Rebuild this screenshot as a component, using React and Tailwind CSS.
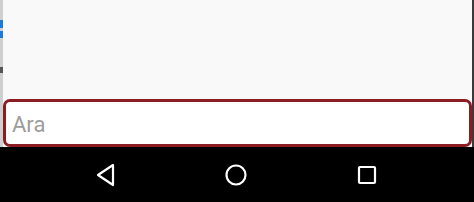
import React from 'react';

const NavBar = () => (
  <div className="h-[55px] bg-black flex items-center gap-[91px] pl-[85px]">
    <svg width="40" height="30" viewBox="0 0 40 30">
      <path d="M28 5 L13 15 L28 25 Z" fill="none" stroke="white" strokeWidth="2.2" strokeLinejoin="round" />
    </svg>
    <svg width="40" height="30" viewBox="0 0 40 30">
      <circle cx="20" cy="15" r="9.5" fill="none" stroke="white" strokeWidth="2.2" />
    </svg>
    <svg width="40" height="30" viewBox="0 0 40 30">
      <rect x="12" y="7" width="16" height="16" rx="1" fill="none" stroke="white" strokeWidth="2.2" />
    </svg>
  </div>
);

export default function App() {
  return (
    <div className="w-[474px] h-[202px] flex flex-col overflow-hidden" style={{ fontFamily: 'Roboto, "Liberation Sans", sans-serif' }}>
      <div className="flex-1 flex">
        {/* left edge of a window behind */}
        <div className="w-[3px] bg-[#cfcfcf] flex flex-col">
          <div className="h-[20px]" />
          <div className="h-[8px] bg-[#1e7ad6]" />
          <div className="h-[3px]" />
          <div className="h-[7px] bg-[#1e7ad6]" />
          <div className="h-[29px]" />
          <div className="h-[6px] bg-[#555]" />
        </div>
        <div className="flex-1 bg-[#f9f9f9] flex flex-col justify-end">
          <div className="h-[48px] border-[3px] border-[#8a1c22] rounded-[7px] bg-white flex items-center pl-[6px] pt-[3px]">
            <input
              placeholder="Ara"
              className="w-full outline-none bg-transparent text-[22px] text-[#333] placeholder:text-[#9c9c9c]"
            />
          </div>
        </div>
        <div className="w-[2px] bg-[#3a3a3a]" />
      </div>
      <NavBar />
    </div>
  );
}
